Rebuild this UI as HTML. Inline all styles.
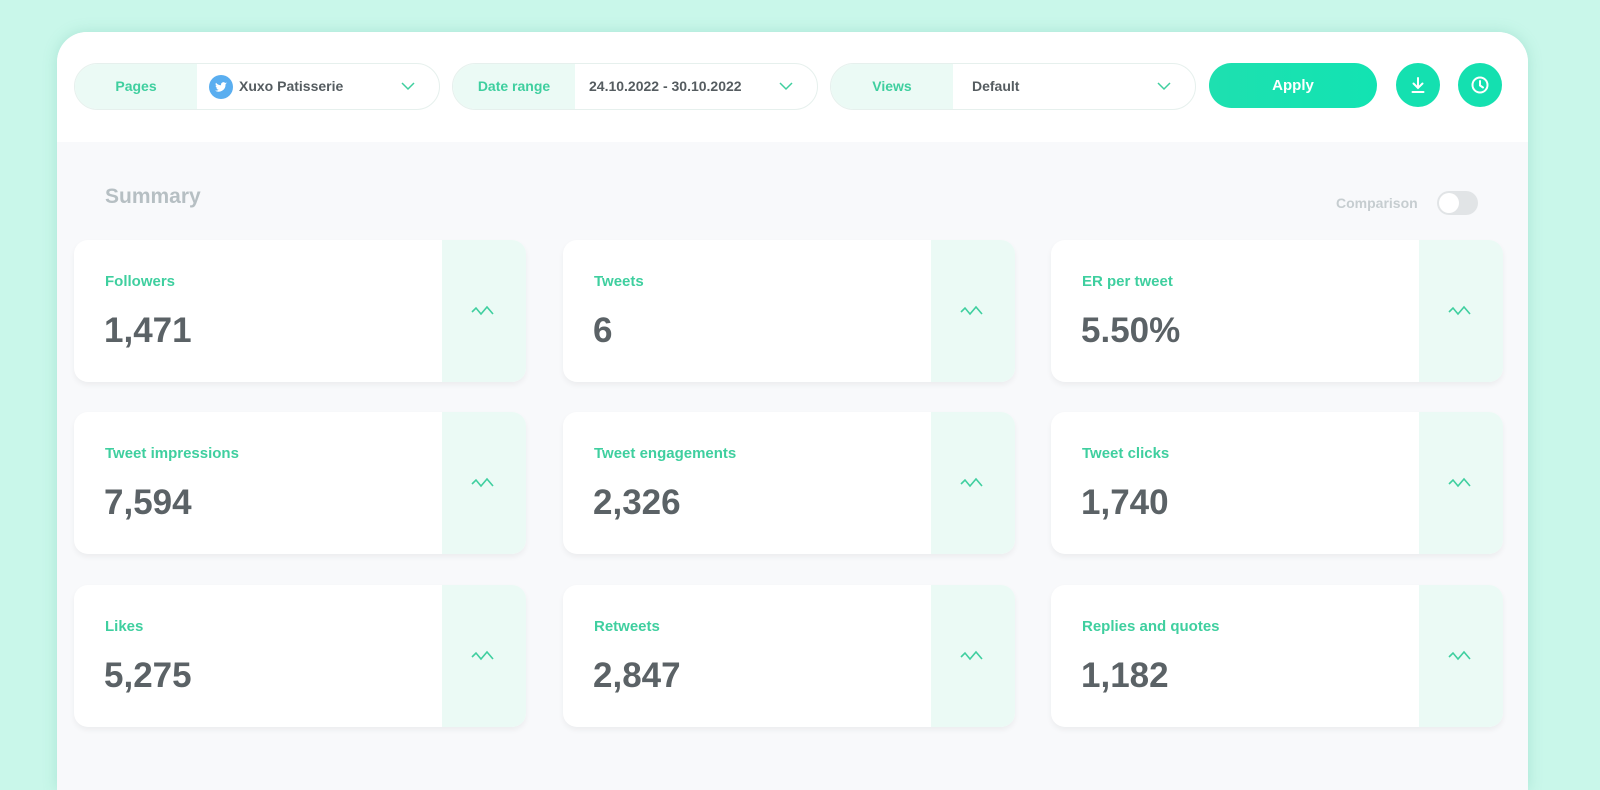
<!DOCTYPE html>
<html style="width:1600px;height:790px;overflow:hidden"><head><style>
*{box-sizing:border-box;margin:0;padding:0}
body{width:1600px;height:790px;background:#c9f7ea;font-family:"Liberation Sans",sans-serif;overflow:hidden;position:relative}
.panel{position:absolute;left:57px;top:32px;width:1471px;height:758px;background:#f8f9fb;border-radius:30px 30px 0 0;overflow:hidden;box-shadow:0 0 14px rgba(80,180,150,.25)}
.head{position:absolute;left:0;top:0;width:100%;height:110px;background:#fff}
.pill{position:absolute;top:31px;height:47px;width:366px;border:1px solid #e6f0ed;border-radius:24px;background:#fff;overflow:hidden}
.pill .lab{position:absolute;left:0;top:0;height:100%;width:122px;background:#ebfaf5;color:#3fcf9f;font-weight:bold;font-size:14px;line-height:45px;text-align:center}
.pill .val{position:absolute;left:136px;top:0;line-height:45px;font-size:14px;color:#555c60;font-weight:bold}
.pill svg.ch{position:absolute;right:24px;top:17px}
.apply{position:absolute;left:1152px;top:31px;width:168px;height:45px;border-radius:23px;background:linear-gradient(90deg,#1ee0b0,#12e3b2);color:#fff;font-weight:bold;font-size:15px;text-align:center;line-height:45px}
.circ{position:absolute;top:31px;width:44px;height:44px;border-radius:50%;background:#14e0b0}
.circ svg{position:absolute;left:11px;top:11px}
.sum{position:absolute;left:48px;top:153px;font-size:21px;font-weight:bold;color:#b6bfc3}
.cmp{position:absolute;left:1279px;top:163px;font-size:14px;font-weight:bold;color:#c6cdd0}
.tog{position:absolute;left:1380px;top:159px;width:41px;height:24px;border-radius:12px;background:#e1e4e6}
.tog:after{content:"";position:absolute;left:2px;top:2px;width:20px;height:20px;border-radius:50%;background:#fff}
.card{position:absolute;width:452px;height:142px;background:#fff;border-radius:14px;overflow:hidden;box-shadow:0 3px 6px rgba(0,0,0,.05)}
.card .side{position:absolute;right:0;top:0;width:84px;height:100%;background:#ebfaf5}
.card .side svg{position:absolute;left:29px;top:64px}
.card .l{position:absolute;left:31px;top:33px;font-size:15px;font-weight:bold;color:#3fcf9f}
.card .v{position:absolute;left:30px;top:71px;font-size:35px;font-weight:bold;color:#5b6266}
</style></head><body>
<div class="panel">
<div class="head">
<div class="pill" style="left:17px"><div class="lab">Pages</div>
<svg style="position:absolute;left:134px;top:11px" width="24" height="24" viewBox="0 0 24 24"><circle cx="12" cy="12" r="12" fill="#5aaef0"/><path d="M18 8.3c-.4.2-.9.3-1.4.4.5-.3.9-.8 1.1-1.3-.5.3-1 .5-1.5.6a2.4 2.4 0 0 0-4.1 2.2A6.8 6.8 0 0 1 7 7.7a2.4 2.4 0 0 0 .7 3.2c-.4 0-.8-.1-1.1-.3 0 1.200.8 2.2 1.9 2.4-.4.1-.7.1-1.1 0 .3 1 1.2 1.7 2.3 1.7A4.8 4.8 0 0 1 6 15.6a6.8 6.8 0 0 0 10.5-6v-.3c.5-.3.9-.7 1.5-1z" fill="#fff"/></svg>
<div class="val" style="left:164px">Xuxo Patisserie</div>
<svg class="ch" width="14" height="10" viewBox="0 0 14 10"><path d="M1 2l6 6 6-6" stroke="#3fcf9f" stroke-width="1.5" fill="none"/></svg></div>
<div class="pill" style="left:395px"><div class="lab">Date range</div><div class="val">24.10.2022 - 30.10.2022</div>
<svg class="ch" width="14" height="10" viewBox="0 0 14 10"><path d="M1 2l6 6 6-6" stroke="#3fcf9f" stroke-width="1.5" fill="none"/></svg></div>
<div class="pill" style="left:773px"><div class="lab">Views</div><div class="val" style="left:141px">Default</div>
<svg class="ch" width="14" height="10" viewBox="0 0 14 10"><path d="M1 2l6 6 6-6" stroke="#3fcf9f" stroke-width="1.5" fill="none"/></svg></div>
<div class="apply">Apply</div>
<div class="circ" style="left:1339px"><svg width="22" height="22" viewBox="0 0 22 22"><path d="M11 4v10M6.5 9.5L11 14l4.5-4.5M5.5 18h11" stroke="#fff" stroke-width="2" fill="none" stroke-linecap="round"/></svg></div>
<div class="circ" style="left:1401px"><svg width="22" height="22" viewBox="0 0 22 22"><circle cx="11" cy="11" r="7.5" stroke="#fff" stroke-width="2" fill="none"/><path d="M11 7v4.5l3 2" stroke="#fff" stroke-width="2" fill="none" stroke-linecap="round"/></svg></div>
</div>
<div class="sum">Summary</div>
<div class="cmp">Comparison</div>
<div class="tog"></div>
</div>
<div style="position:absolute;left:0;top:0">
<div class="card" style="left:74px;top:240px"><div class="l">Followers</div><div class="v">1,471</div><div class="side"><svg width="26" height="14" viewBox="0 0 26 14"><path d="M1 8l4-4 5 6 6-7 6 7" stroke="#3fcf9f" stroke-width="1.6" fill="none"/></svg></div></div>
<div class="card" style="left:563px;top:240px"><div class="l">Tweets</div><div class="v">6</div><div class="side"><svg width="26" height="14" viewBox="0 0 26 14"><path d="M1 8l4-4 5 6 6-7 6 7" stroke="#3fcf9f" stroke-width="1.6" fill="none"/></svg></div></div>
<div class="card" style="left:1051px;top:240px"><div class="l">ER per tweet</div><div class="v">5.50%</div><div class="side"><svg width="26" height="14" viewBox="0 0 26 14"><path d="M1 8l4-4 5 6 6-7 6 7" stroke="#3fcf9f" stroke-width="1.6" fill="none"/></svg></div></div>
<div class="card" style="left:74px;top:412px"><div class="l">Tweet impressions</div><div class="v">7,594</div><div class="side"><svg width="26" height="14" viewBox="0 0 26 14"><path d="M1 8l4-4 5 6 6-7 6 7" stroke="#3fcf9f" stroke-width="1.6" fill="none"/></svg></div></div>
<div class="card" style="left:563px;top:412px"><div class="l">Tweet engagements</div><div class="v">2,326</div><div class="side"><svg width="26" height="14" viewBox="0 0 26 14"><path d="M1 8l4-4 5 6 6-7 6 7" stroke="#3fcf9f" stroke-width="1.6" fill="none"/></svg></div></div>
<div class="card" style="left:1051px;top:412px"><div class="l">Tweet clicks</div><div class="v">1,740</div><div class="side"><svg width="26" height="14" viewBox="0 0 26 14"><path d="M1 8l4-4 5 6 6-7 6 7" stroke="#3fcf9f" stroke-width="1.6" fill="none"/></svg></div></div>
<div class="card" style="left:74px;top:585px"><div class="l">Likes</div><div class="v">5,275</div><div class="side"><svg width="26" height="14" viewBox="0 0 26 14"><path d="M1 8l4-4 5 6 6-7 6 7" stroke="#3fcf9f" stroke-width="1.6" fill="none"/></svg></div></div>
<div class="card" style="left:563px;top:585px"><div class="l">Retweets</div><div class="v">2,847</div><div class="side"><svg width="26" height="14" viewBox="0 0 26 14"><path d="M1 8l4-4 5 6 6-7 6 7" stroke="#3fcf9f" stroke-width="1.6" fill="none"/></svg></div></div>
<div class="card" style="left:1051px;top:585px"><div class="l">Replies and quotes</div><div class="v">1,182</div><div class="side"><svg width="26" height="14" viewBox="0 0 26 14"><path d="M1 8l4-4 5 6 6-7 6 7" stroke="#3fcf9f" stroke-width="1.6" fill="none"/></svg></div></div>
</div>
</body></html>
